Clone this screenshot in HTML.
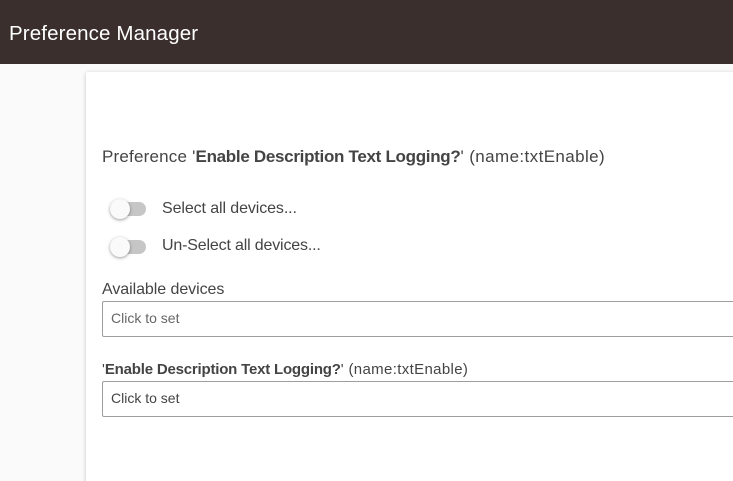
<!DOCTYPE html>
<html>
<head>
<meta charset="utf-8">
<style>
html,body{margin:0;padding:0;width:733px;height:481px;overflow:hidden;background:#fafafa;font-family:"Liberation Sans",sans-serif;color:#444}
#w{position:relative;width:733px;height:481px;overflow:hidden}
.bar{position:absolute;left:0;top:0;width:733px;height:64px;background:#3a2f2d}
.t{position:absolute;white-space:nowrap}
.card{position:absolute;left:86px;top:72px;width:660px;height:420px;background:#fff;border-radius:2px;box-shadow:0 1px 4px rgba(0,0,0,.22)}
.track{position:absolute;width:26px;height:14px;border-radius:7px;background:#c6c6c6}
.knob{position:absolute;width:20px;height:20px;border-radius:50%;background:#fafafa;box-shadow:0 1px 3px rgba(0,0,0,.4)}
.box{position:absolute;left:102px;width:660px;height:34px;border:1px solid #9e9e9e;border-radius:2px;background:#fff}
</style>
</head>
<body>
<div id="w">
<div class="bar"></div>
<div class="t" style="left:9px;top:22px;font-size:20.5px;line-height:24px;letter-spacing:.13px;color:#fff">Preference Manager</div>
<div class="card"></div>
<div class="t" style="left:102px;top:147px;font-size:17px;line-height:20px"><span style="letter-spacing:.2px">Preference '</span><b style="letter-spacing:-.3px">Enable Description Text Logging?</b><span style="letter-spacing:.4px">' (name:txtEnable)</span></div>
<div class="track" style="left:120px;top:202px"></div>
<div class="knob" style="left:110px;top:199px"></div>
<div class="t" style="left:162px;top:199px;font-size:16px;line-height:20px;letter-spacing:-.1px">Select all devices...</div>
<div class="track" style="left:120px;top:240px"></div>
<div class="knob" style="left:110px;top:237px"></div>
<div class="t" style="left:162px;top:236px;font-size:16px;line-height:20px;letter-spacing:-.17px">Un-Select all devices...</div>
<div class="t" style="left:102px;top:280px;font-size:16px;line-height:20px;letter-spacing:-.06px">Available devices</div>
<div class="box" style="top:301px"></div>
<div class="t" style="left:111px;top:310px;font-size:14px;line-height:17px;color:#666">Click to set</div>
<div class="t" style="left:102px;top:360px;font-size:15px;line-height:20px">'<b style="letter-spacing:-.2px">Enable Description Text Logging?</b><span style="letter-spacing:.35px">' (name:txtEnable)</span></div>
<div class="box" style="top:381px"></div>
<div class="t" style="left:111px;top:390px;font-size:14px;line-height:17px;color:#444">Click to set</div>
</div>
</body>
</html>
